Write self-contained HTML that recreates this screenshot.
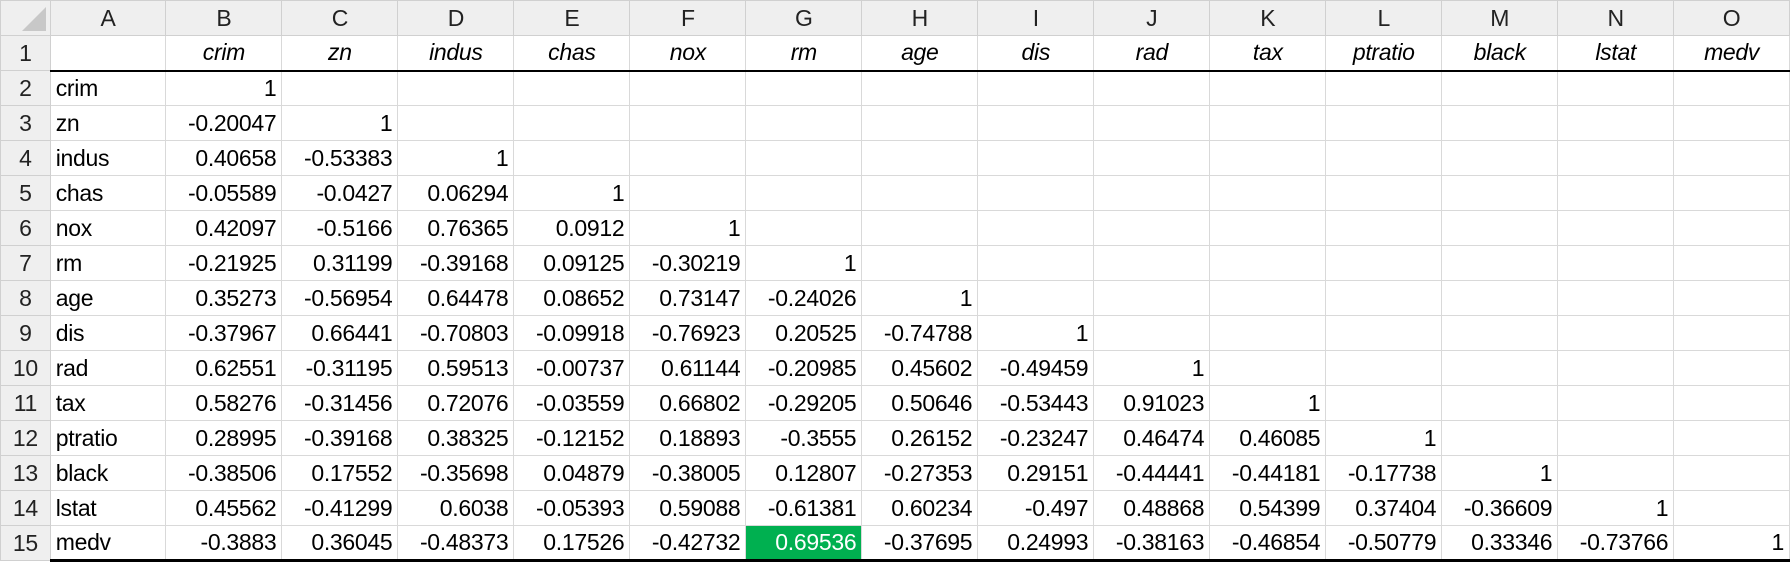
<!DOCTYPE html>
<html><head><meta charset="utf-8"><style>
body{margin:0;background:#fff;width:1790px;height:564px;overflow:hidden;font-family:"Liberation Sans",sans-serif;}
table{border-collapse:collapse;table-layout:fixed;position:absolute;left:0;top:0;}
td{height:35px;padding:0 5px;border:1px solid #d9d9d9;font-size:23px;color:#000;white-space:nowrap;overflow:hidden;text-align:right;box-sizing:border-box;letter-spacing:-0.3px}
tr.h td{background:#efefef;text-align:center;border-color:#d0d0d0;color:#222}
td.r{background:#efefef;text-align:center;border-color:#d0d0d0;color:#222;padding:0}
tr.one td{font-style:italic;text-align:center;border-bottom:2px solid #000}
tr.one td.r{font-style:normal;border-bottom:1px solid #d0d0d0}
tr.last td{border-bottom:3px solid #000}
tr.last td.r{border-bottom:1px solid #d0d0d0}
td.l{text-align:left}
td.g{background:#00b050;color:#fff}
</style></head><body>
<table>
<colgroup><col style="width:50px"><col span="15" style="width:116.2px"></colgroup>
<tr class="h"><td style="padding:0;position:relative"><div style="position:absolute;right:4px;bottom:4px;width:0;height:0;border-left:24px solid transparent;border-bottom:24px solid #c8c8c8"></div></td><td>A</td><td>B</td><td>C</td><td>D</td><td>E</td><td>F</td><td>G</td><td>H</td><td>I</td><td>J</td><td>K</td><td>L</td><td>M</td><td>N</td><td>O</td></tr>
<tr class="one"><td class="r">1</td><td></td><td>crim</td><td>zn</td><td>indus</td><td>chas</td><td>nox</td><td>rm</td><td>age</td><td>dis</td><td>rad</td><td>tax</td><td>ptratio</td><td>black</td><td>lstat</td><td>medv</td></tr>
<tr><td class="r">2</td><td class="l">crim</td><td>1</td><td></td><td></td><td></td><td></td><td></td><td></td><td></td><td></td><td></td><td></td><td></td><td></td><td></td></tr>
<tr><td class="r">3</td><td class="l">zn</td><td>-0.20047</td><td>1</td><td></td><td></td><td></td><td></td><td></td><td></td><td></td><td></td><td></td><td></td><td></td><td></td></tr>
<tr><td class="r">4</td><td class="l">indus</td><td>0.40658</td><td>-0.53383</td><td>1</td><td></td><td></td><td></td><td></td><td></td><td></td><td></td><td></td><td></td><td></td><td></td></tr>
<tr><td class="r">5</td><td class="l">chas</td><td>-0.05589</td><td>-0.0427</td><td>0.06294</td><td>1</td><td></td><td></td><td></td><td></td><td></td><td></td><td></td><td></td><td></td><td></td></tr>
<tr><td class="r">6</td><td class="l">nox</td><td>0.42097</td><td>-0.5166</td><td>0.76365</td><td>0.0912</td><td>1</td><td></td><td></td><td></td><td></td><td></td><td></td><td></td><td></td><td></td></tr>
<tr><td class="r">7</td><td class="l">rm</td><td>-0.21925</td><td>0.31199</td><td>-0.39168</td><td>0.09125</td><td>-0.30219</td><td>1</td><td></td><td></td><td></td><td></td><td></td><td></td><td></td><td></td></tr>
<tr><td class="r">8</td><td class="l">age</td><td>0.35273</td><td>-0.56954</td><td>0.64478</td><td>0.08652</td><td>0.73147</td><td>-0.24026</td><td>1</td><td></td><td></td><td></td><td></td><td></td><td></td><td></td></tr>
<tr><td class="r">9</td><td class="l">dis</td><td>-0.37967</td><td>0.66441</td><td>-0.70803</td><td>-0.09918</td><td>-0.76923</td><td>0.20525</td><td>-0.74788</td><td>1</td><td></td><td></td><td></td><td></td><td></td><td></td></tr>
<tr><td class="r">10</td><td class="l">rad</td><td>0.62551</td><td>-0.31195</td><td>0.59513</td><td>-0.00737</td><td>0.61144</td><td>-0.20985</td><td>0.45602</td><td>-0.49459</td><td>1</td><td></td><td></td><td></td><td></td><td></td></tr>
<tr><td class="r">11</td><td class="l">tax</td><td>0.58276</td><td>-0.31456</td><td>0.72076</td><td>-0.03559</td><td>0.66802</td><td>-0.29205</td><td>0.50646</td><td>-0.53443</td><td>0.91023</td><td>1</td><td></td><td></td><td></td><td></td></tr>
<tr><td class="r">12</td><td class="l">ptratio</td><td>0.28995</td><td>-0.39168</td><td>0.38325</td><td>-0.12152</td><td>0.18893</td><td>-0.3555</td><td>0.26152</td><td>-0.23247</td><td>0.46474</td><td>0.46085</td><td>1</td><td></td><td></td><td></td></tr>
<tr><td class="r">13</td><td class="l">black</td><td>-0.38506</td><td>0.17552</td><td>-0.35698</td><td>0.04879</td><td>-0.38005</td><td>0.12807</td><td>-0.27353</td><td>0.29151</td><td>-0.44441</td><td>-0.44181</td><td>-0.17738</td><td>1</td><td></td><td></td></tr>
<tr><td class="r">14</td><td class="l">lstat</td><td>0.45562</td><td>-0.41299</td><td>0.6038</td><td>-0.05393</td><td>0.59088</td><td>-0.61381</td><td>0.60234</td><td>-0.497</td><td>0.48868</td><td>0.54399</td><td>0.37404</td><td>-0.36609</td><td>1</td><td></td></tr>
<tr class="last"><td class="r">15</td><td class="l">medv</td><td>-0.3883</td><td>0.36045</td><td>-0.48373</td><td>0.17526</td><td>-0.42732</td><td class="g">0.69536</td><td>-0.37695</td><td>0.24993</td><td>-0.38163</td><td>-0.46854</td><td>-0.50779</td><td>0.33346</td><td>-0.73766</td><td>1</td></tr>
</table>
</body></html>
